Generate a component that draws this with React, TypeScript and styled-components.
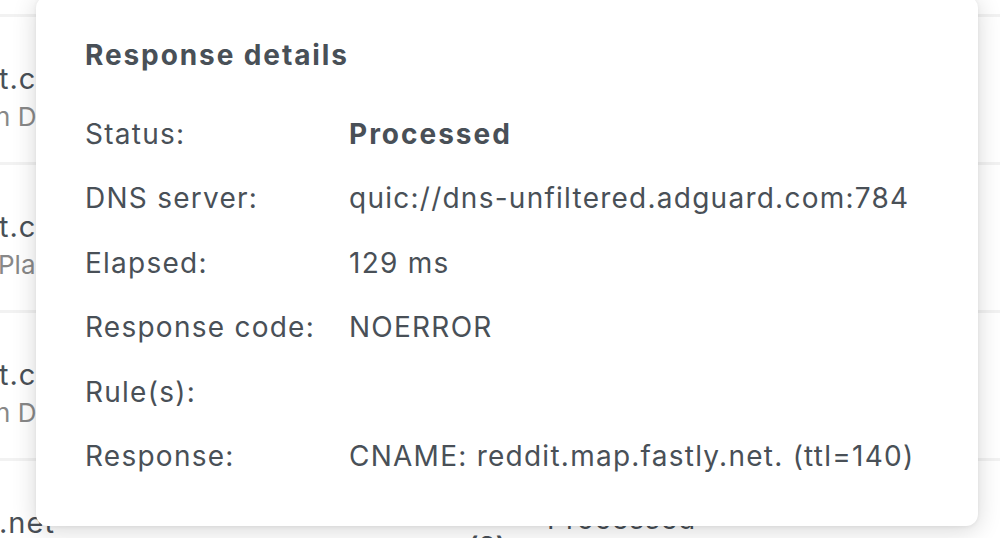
import styled, { createGlobalStyle } from "styled-components";

const GlobalStyle = createGlobalStyle`
  html, body {
    margin: 0;
    padding: 0;
    background: #ffffff;
    overflow: hidden;
  }
  body {
    font-family: Inter, "Noto Sans", "Liberation Sans", sans-serif;
    color: #495057;
  }
`;

const Page = styled.div`
  position: relative;
  width: 1000px;
  height: 538px;
  overflow: hidden;
  background: #ffffff;
`;

const Table = styled.div`
  display: flex;
  flex-direction: column;
  padding-top: 14px;
`;

const Row = styled.div`
  display: grid;
  grid-template-columns: 468px 1fr;
  height: 148px;
  border-top: 3px solid #f2f2f2;
  box-sizing: border-box;
`;

const DomainCell = styled.div`
  display: flex;
  flex-direction: column;
  padding-top: 44px;
  margin-left: -1px;
  gap: 4px;
`;

const Domain = styled.div`
  font-size: 29px;
  line-height: 36px;
  letter-spacing: 1px;
  color: #495057;
  white-space: nowrap;
`;

const Client = styled.div<{ $shift?: number }>`
  font-size: 26px;
  line-height: 32px;
  margin-left: ${(p) => p.$shift ?? 0}px;
  color: #888888;
  white-space: nowrap;
`;

const StatusCell = styled.div`
  display: flex;
  align-items: flex-start;
  gap: 40px;
  padding-top: 40px;
  font-size: 28px;
  line-height: 36px;
  letter-spacing: 1px;
  color: #495057;
`;

const Hint = styled.span`
  font-weight: 600;
  margin-top: 28px;
`;

const Card = styled.div`
  position: absolute;
  left: 36px;
  top: -4px;
  width: 942px;
  height: 530px;
  box-sizing: border-box;
  padding: 39px 49px 0;
  background: #ffffff;
  border-radius: 12px;
  box-shadow: 0 4px 24px rgba(0, 0, 0, 0.16), 0 1px 4px rgba(0, 0, 0, 0.06);
`;

const Title = styled.h2`
  margin: 0 0 39px;
  font-size: 28px;
  line-height: 40px;
  font-weight: 700;
  letter-spacing: 1.9px;
  color: #495057;
`;

const Details = styled.dl`
  display: grid;
  grid-template-columns: 264px 1fr;
  grid-auto-rows: 40px;
  row-gap: 24.4px;
  margin: 0;
  font-size: 28px;
  line-height: 40px;
  letter-spacing: 1.25px;
`;

const Label = styled.dt`
  margin: 0;
  color: #495057;
  white-space: nowrap;
`;

const Value = styled.dd<{ $bold?: boolean }>`
  margin: 0;
  color: #495057;
  white-space: nowrap;
  font-weight: ${(p) => (p.$bold ? 700 : 400)};
  letter-spacing: ${(p) => (p.$bold ? "2px" : "1.25px")};
`;

const rows = [
  { domain: "t.com", client: "n DNS", shift: -4 },
  { domain: "t.com", client: "Plain DNS", shift: -1 },
  { domain: "t.com", client: "n DNS", shift: -4 },
  { domain: ".net", client: "Plain DNS", shift: -1 },
];

const details: { label: string; value: string; bold?: boolean }[] = [
  { label: "Status:", value: "Processed", bold: true },
  { label: "DNS server:", value: "quic://dns-unfiltered.adguard.com:784" },
  { label: "Elapsed:", value: "129 ms" },
  { label: "Response code:", value: "NOERROR" },
  { label: "Rule(s):", value: "" },
  { label: "Response:", value: "CNAME: reddit.map.fastly.net. (ttl=140)" },
];

export default function App() {
  return (
    <Page>
      <GlobalStyle />
      <Table>
        {rows.map((row, i) => (
          <Row key={i}>
            <DomainCell>
              <Domain>{row.domain}</Domain>
              <Client $shift={row.shift}>{row.client}</Client>
            </DomainCell>
            <StatusCell>
              <Hint>(?)</Hint>
              <span>Processed</span>
            </StatusCell>
          </Row>
        ))}
      </Table>
      <Card>
        <Title>Response details</Title>
        <Details>
          {details.map((d) => (
            <>
              <Label key={d.label + "l"}>{d.label}</Label>
              <Value key={d.label + "v"} $bold={d.bold}>
                {d.value}
              </Value>
            </>
          ))}
        </Details>
      </Card>
    </Page>
  );
}
